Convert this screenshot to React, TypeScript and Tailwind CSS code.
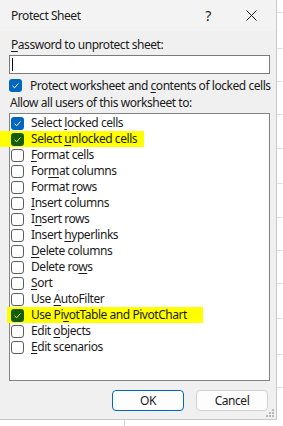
import React from 'react';

type Item = { pre: string; key: string; post: string; checked?: boolean; marked?: boolean };

const items: Item[] = [
  { pre: 'Select ', key: 'l', post: 'ocked cells', checked: true },
  { pre: 'Select ', key: 'u', post: 'nlocked cells', checked: true, marked: true },
  { pre: '', key: 'F', post: 'ormat cells' },
  { pre: 'For', key: 'm', post: 'at columns' },
  { pre: 'Format ', key: 'r', post: 'ows' },
  { pre: '', key: 'I', post: 'nsert columns' },
  { pre: 'I', key: 'n', post: 'sert rows' },
  { pre: 'Insert ', key: 'h', post: 'yperlinks' },
  { pre: '', key: 'D', post: 'elete columns' },
  { pre: 'Delete ro', key: 'w', post: 's' },
  { pre: '', key: 'S', post: 'ort' },
  { pre: 'Use ', key: 'A', post: 'utoFilter' },
  { pre: 'Use Pi', key: 'v', post: 'otTable and PivotChart', checked: true, marked: true },
  { pre: 'Edit ', key: 'o', post: 'bjects' },
  { pre: '', key: 'E', post: 'dit scenarios' },
];

const gridRows = [12, 48, 81, 114, 148, 183, 217, 250, 283, 318, 354, 387];

function Check({ tone }: { tone: 'blue' | 'green' | 'none' }) {
  if (tone === 'none') {
    return <span className="w-[13px] h-[13px] rounded-[3px] border border-[#5c5c5c] bg-white shrink-0" />;
  }
  return (
    <span
      className={`w-[13px] h-[13px] rounded-[3px] shrink-0 flex items-center justify-center ${
        tone === 'blue' ? 'bg-[#0067c0]' : 'bg-[#145c0c]'
      }`}
    >
      <svg width="9" height="9" viewBox="0 0 9 9" fill="none">
        <path d="M1.5 4.8 L3.6 6.8 L7.5 2.4" stroke={tone === 'blue' ? '#ffffff' : '#d9f07a'} strokeWidth="1" />
      </svg>
    </span>
  );
}

export default function App() {
  return (
    <div className="relative w-[283px] h-[426px] bg-white overflow-hidden text-[12px] tracking-[-0.45px] text-[#1b1b1b] font-['Noto_Sans',sans-serif]">
      {/* sheet gridlines behind */}
      {gridRows.map((y) => (
        <div key={y} className="absolute left-[277px] right-0 h-px bg-[#e1e1e1]" style={{ top: y }} />
      ))}
      <div className="absolute left-[124px] top-[419px] bottom-0 w-px bg-[#d4d4d4]" />

      {/* dialog */}
      <div className="relative w-[277px] h-[420px] bg-[#f0f0f0] border-r border-b border-[#c9c9c9] flex flex-col">
        {/* Title bar */}
        <div className="h-[31px] bg-[#f3f3f3] flex items-center pl-[11px] shrink-0">
          <span className="flex-1 leading-none">Protect Sheet</span>
          <span className="w-[40px] text-center text-[14px] leading-none -mr-[2px]">?</span>
          <span className="w-[50px] flex justify-center">
            <svg width="11" height="11" viewBox="0 0 11 11">
              <path d="M0.5 0.5 L10.5 10.5 M10.5 0.5 L0.5 10.5" stroke="#1b1b1b" strokeWidth="1" />
            </svg>
          </span>
        </div>

        <div className="px-[9px] flex flex-col">
          <div className="h-[14px] mt-[7px] leading-[14px] pl-[2px]">
            <span className="underline underline-offset-2">P</span>assword to unprotect sheet:
          </div>
          <div className="mt-[3px] h-[19px] bg-white border border-[#7a7a7a] w-[261px] flex items-center pl-[2px]">
            <span className="w-px h-[13px] bg-black" />
          </div>
          <div className="mt-[5px] h-[13px] flex items-center gap-[8px] whitespace-nowrap">
            <Check tone="blue" />
            <span className="leading-none">
              Protect worksheet and <span className="underline underline-offset-2">c</span>ontents of locked cells
            </span>
          </div>
          <div className="mt-[4px] h-[14px] leading-[14px] pl-[1px]">Allow all users of this worksheet to:</div>

          <div className="mt-[3px] w-[261px] h-[268px] bg-white border border-[#838383] pt-px flex flex-col">
            {items.map((it, i) => (
              <div key={i} className="relative h-[16px] flex items-center pl-[1px] gap-[7px]">
                {it.marked && (
                  <div
                    className={`absolute top-0 h-[16px] bg-[#ffff00] ${
                      i === 1 ? '-left-[10px] w-[144px]' : '-left-[3px] w-[196px]'
                    }`}
                  />
                )}
                <span className="relative flex">
                  <Check tone={it.checked ? (it.marked ? 'green' : 'blue') : 'none'} />
                </span>
                <span className="relative leading-none whitespace-nowrap">
                  {it.pre}
                  <span className="underline underline-offset-2">{it.key}</span>
                  {it.post}
                </span>
              </div>
            ))}
          </div>
        </div>

        <div className="mt-[9px] flex justify-end gap-[12px] pr-[8px]">
          <button className="w-[72px] h-[21px] rounded-[4px] bg-[#fdfdfd] border border-[#0067c0] leading-none">OK</button>
          <button className="w-[72px] h-[21px] rounded-[4px] bg-[#fdfdfd] border border-[#d0d0d0] leading-none">Cancel</button>
        </div>

        {/* resize grip */}
        <svg className="absolute right-[1px] bottom-[1px]" width="9" height="9" viewBox="0 0 9 9">
          <rect x="6" y="0" width="2" height="2" fill="#b8b8b8" />
          <rect x="3" y="3" width="2" height="2" fill="#b8b8b8" />
          <rect x="6" y="3" width="2" height="2" fill="#b8b8b8" />
          <rect x="0" y="6" width="2" height="2" fill="#b8b8b8" />
          <rect x="3" y="6" width="2" height="2" fill="#b8b8b8" />
          <rect x="6" y="6" width="2" height="2" fill="#b8b8b8" />
        </svg>
      </div>
    </div>
  );
}
